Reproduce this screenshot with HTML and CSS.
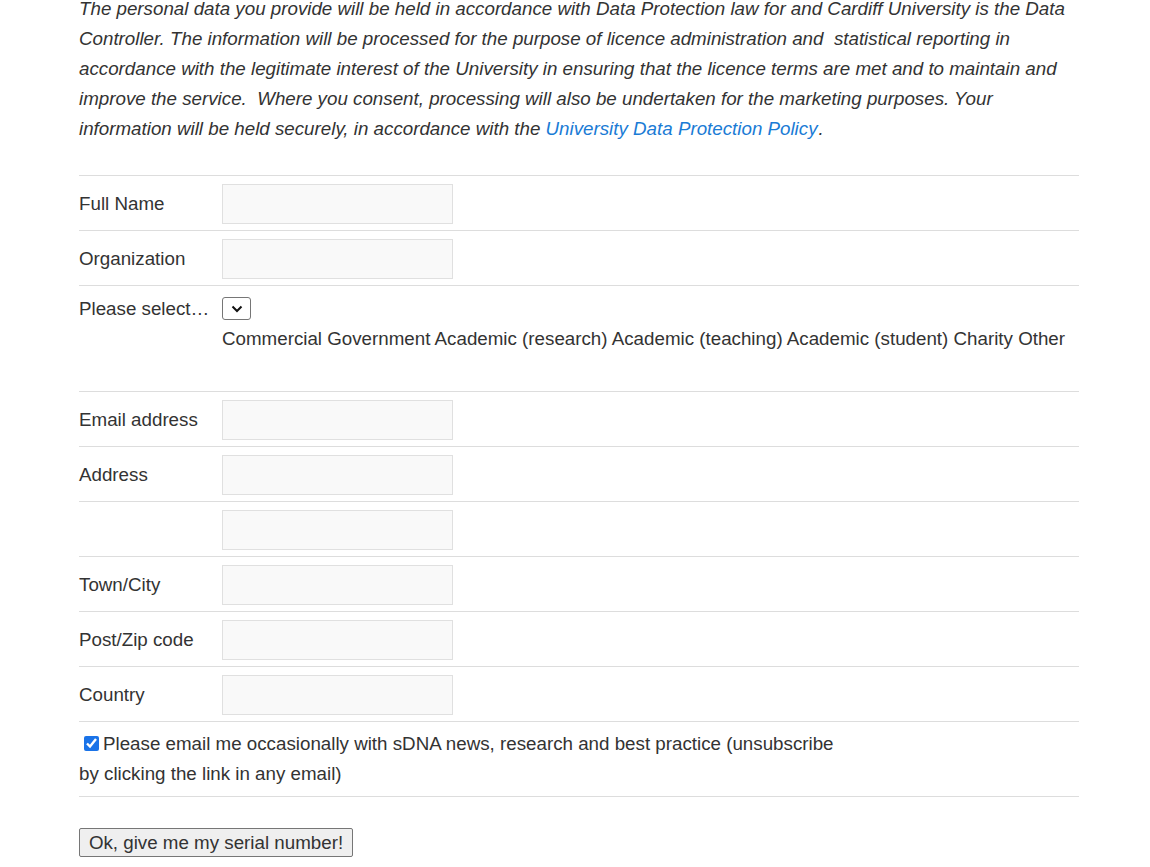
FILE: index.html
```html
<!DOCTYPE html>
<html>
<head>
<meta charset="utf-8">
<link rel="stylesheet" href="styles.css">
</head>
<body>
<div class="page">
  <p class="notice">The personal data you provide will be held in accordance with Data Protection law for and Cardiff University is the Data Controller. The information will be processed for the purpose of licence administration and &nbsp;statistical reporting in accordance with the legitimate interest of the University in ensuring that the licence terms are met and to maintain and improve the service. &nbsp;Where you consent, processing will also be undertaken for the marketing purposes. Your information will be held securely, in accordance with the <a href="#" class="link">University Data Protection Policy</a>.</p>
  <form class="form">
    <table class="fields">
      <tr><td class="label">Full Name</td><td><input class="field" type="text"></td></tr>
      <tr><td class="label">Organization</td><td><input class="field" type="text"></td></tr>
      <tr class="select-row">
        <td class="label top">Please select…</td>
        <td class="top">
          <div class="select"><svg width="12" height="8" viewBox="0 0 12 8"><path d="M1.5 1.5 L6 6 L10.5 1.5" fill="none" stroke="#111" stroke-width="2"/></svg></div>
          <div class="options">Commercial Government Academic (research) Academic (teaching) Academic (student) Charity Other</div>
        </td>
      </tr>
      <tr><td class="label">Email address</td><td><input class="field" type="text"></td></tr>
      <tr><td class="label">Address</td><td><input class="field" type="text"></td></tr>
      <tr><td class="label"></td><td><input class="field" type="text"></td></tr>
      <tr><td class="label">Town/City</td><td><input class="field" type="text"></td></tr>
      <tr><td class="label">Post/Zip code</td><td><input class="field" type="text"></td></tr>
      <tr><td class="label">Country</td><td><input class="field" type="text"></td></tr>
      <tr class="check-row">
        <td colspan="2"><label class="consent"><input type="checkbox" class="check" checked>Please email me occasionally with sDNA news, research and best practice (unsubscribe by clicking the link in any email)</label></td>
      </tr>
    </table>
    <button type="button" class="submit">Ok, give me my serial number!</button>
  </form>
</div>
</body>
</html>
```

FILE: styles.css
```css
html, body {
  margin: 0;
  padding: 0;
  background: #fff;
}
body {
  font-family: "Liberation Sans", Arial, sans-serif;
  font-size: 18.75px;
  line-height: 30px;
  color: #333;
}
.page {
  width: 1000px;
  margin-left: 79px;
}
.notice {
  font-style: italic;
  margin: -6px 0 31px;
}
.link {
  color: #1a7bd5;
  text-decoration: none;
  padding-right: 1px;
}
.fields {
  width: 1000px;
  border-collapse: collapse;
  border-top: 1px solid #ddd;
}
.fields tr {
  border-bottom: 1px solid #ddd;
}
.fields td {
  padding: 8px 0 6px;
  vertical-align: middle;
}
.fields td.label {
  width: 143px;
  white-space: nowrap;
}
.fields td.top {
  vertical-align: top;
}
.field {
  display: block;
  box-sizing: border-box;
  width: 231px;
  height: 40px;
  margin: 0;
  border: 1px solid #e0e0e0;
  background: #f9f9f9;
  font: inherit;
}
.select {
  box-sizing: border-box;
  width: 29px;
  height: 23px;
  margin-top: 3px;
  border: 1px solid #767676;
  border-radius: 3px;
  display: flex;
  align-items: center;
  justify-content: center;
}
.select-row td {
  padding-bottom: 37px;
}
.options {
  margin-top: 4px;
}
.check-row td {
  padding: 7px 0 7px;
}
.consent {
  display: block;
  width: 760px;
}
.check {
  width: 15px;
  height: 15px;
  margin: 0 4px 0 5px;
  vertical-align: -1px;
  accent-color: #1a73e8;
}
.submit {
  margin-top: 31px;
  box-sizing: border-box;
  width: 274px;
  height: 29px;
  padding: 0;
  font: inherit;
  line-height: 27px;
  color: #333;
  background: #efefef;
  border: 1px solid #767676;
  border-radius: 2px;
}
```
